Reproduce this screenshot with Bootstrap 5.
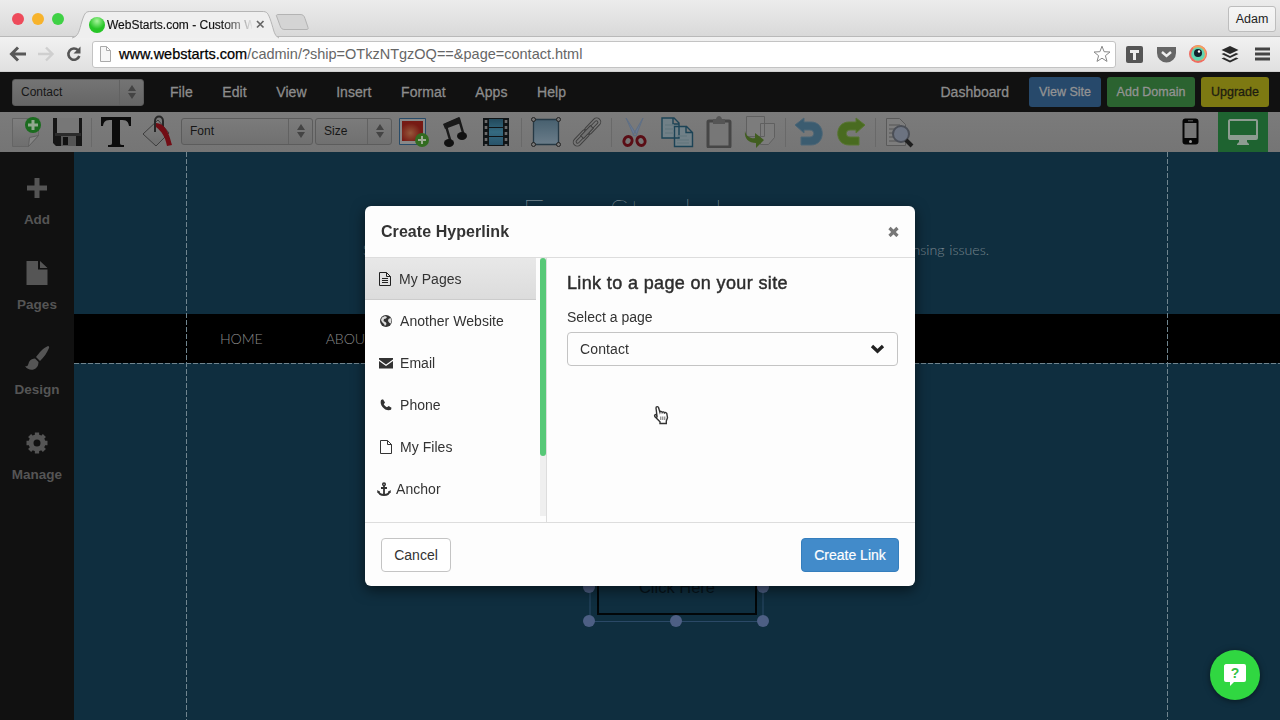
<!DOCTYPE html>
<html lang="en">
<head>
<meta charset="utf-8">
<title>WebStarts.com - Custom Website</title>
<link rel="stylesheet" href="https://cdn.jsdelivr.net/npm/bootstrap@5.3.0/dist/css/bootstrap.min.css">
<style>
body{width:1280px;height:720px;overflow:hidden;font:14px/20px "Liberation Sans",Arial,sans-serif;color:#333;background:#0f2e3f}
svg{display:block;flex:none}
.tabstrip{height:37px;background:linear-gradient(#ececec,#d9d9d9);border-bottom:1px solid #b9b9b9;padding-left:12px}
.lights{gap:8px;margin-top:1px}
.lights i{width:12px;height:12px;border-radius:50%}
.lights .r{background:#ee4b5b}.lights .y{background:#f7b32c}.lights .g{background:#3fd145}
.tab-front{width:207px;height:27px;margin:11px 0 -1px 0;position:relative;z-index:1}
.tab-front>svg.shape,.tab-next{overflow:visible}
.tab-front .face{position:absolute;inset:0;padding-left:17px}
.tab-text{width:145px;font-size:12px;color:#111;white-space:nowrap;letter-spacing:0;margin-left:2px;-webkit-text-stroke:.15px #111;-webkit-mask-image:linear-gradient(90deg,#000 115px,transparent 147px)}
.profile{width:48px;height:26px;border:1px solid #bdbdbd;border-radius:3px;background:linear-gradient(#f6f6f6,#ececec);font-size:12.5px;color:#222;margin:6px 4px 0 auto}
.omni{height:35px;background:linear-gradient(#f1f1f1,#e0e0e0);border-bottom:1px solid #cfcfcf;padding-left:9px}
.address{width:1024px;height:27px;background:#fff;border:1px solid #c3c3c3;border-radius:3px;padding:0 4px 0 6px;font-size:14.5px;color:#666;white-space:nowrap}
.address-text{margin-left:7px}
.address b{font-weight:400;color:#000;-webkit-text-stroke:.25px #000}
.menubar{height:40px;background:#111;padding:0 11px 0 12px;color:#8c8c8c;-webkit-text-stroke:.3px currentColor}
.menus{gap:29.6px;margin-left:26px;letter-spacing:.05px}
.dash{margin-right:20px}
.picker{border:1px solid #5c5c5c;border-radius:3px;background:linear-gradient(#747474,#666);font-size:12px;color:#161616;-webkit-text-stroke:0;padding-left:8px}
.picker.page{width:132px;height:27px;-webkit-text-stroke:0}
.picker .arrows{width:24px;border-left:1px solid #626262}
.topbtn{height:30px;font-size:12.5px;border-radius:3px;border:0;color:#939393}
.view{width:72px;background:#27496b}.domain{width:88px;background:#2b6330;margin:0 6px}.upgrade{width:68px;background:#7d7912;color:#1d1d10}
.tools{height:40px;background:linear-gradient(#7b7b7b,#757575);display:grid;align-items:center;justify-items:center;
grid-template-columns:52px 32px 14px 36px 47px 132px 2px 77px 43px 41px 40px 10px 39px 44px 4px 44px 40px 43px 40px 10px 38px 45px 4px 44px 1fr 41px 7px 50px 12px}
.tools>svg{margin-top:-1px}
.tools .picker{height:27px;width:100%;background:linear-gradient(#7b7b7b,#707070);margin-top:-2px}
.bar{width:1px;height:29px;background:#696969}
.device{background:#1e6330}
.workspace{height:568px}
.rail{width:74px;background:#111;padding-top:22px;color:#555;font-weight:700;font-size:13.5px}
.rail div{height:85px}
.rail span{margin-top:8px;line-height:20px}
.rail svg{height:28px}
.site{position:relative;background:#0f2e3f;overflow:hidden}
.thin{font-family:Lato,"Open Sans",sans-serif;font-weight:300;color:#77858c}
.site-head{height:162px;padding-top:37px}
.site-head h1{font:100 40px/48px Lato,sans-serif;letter-spacing:.25px;margin:0;color:#a3afb5}
.site-head p{font-size:14.2px;line-height:20px;margin:3px 0 0;width:626px;text-align:justify;text-align-last:justify;white-space:nowrap;position:relative;left:-1px}
.site-nav{height:49px;background:#000;padding-left:146px;gap:63px;color:#8a8a8a;font-size:14.2px;letter-spacing:-.1px}
.guide{position:absolute;inset:0 112px 0 112px;pointer-events:none}
.guide svg{width:100%;height:100%}
.fold{top:211px}
.cta{position:absolute;left:508px;top:394px}
.shade{position:fixed;inset:206px 0 auto 0}
.dialog{width:550px;height:380px;background:#fdfdfd;border-radius:6px;box-shadow:0 4px 14px rgba(0,0,0,.55);overflow:hidden}
.dialog-head{height:52px;border-bottom:1px solid #ddd;padding:0 16px;font-size:16px;letter-spacing:.06px}
.dialog-main{height:264px}
.side{width:182px;border-right:1px solid #ddd}
.side .opts{width:171px;letter-spacing:.04px}
.side .opts div{height:42px;padding-left:14px}
.side .opts .on{background:linear-gradient(#e8e8e8,#dcdcdc);border-bottom:1px solid #ccc}
.side .opts svg{width:14px;margin-right:7px}
.side .opts .last{padding-left:12px}.side .opts .last svg{margin-right:5px}
.side .opts .on svg{width:14px;margin-left:-1px}
.track{width:6px;height:258px;background:#efefef;margin-left:4px}
.track i{height:198px;background:#57c877;border-radius:3px}
.pane{padding:13px 17px 0 20px}
.pane h2{font-size:18px;line-height:24px;margin:0 0 13px;letter-spacing:.36px;color:#2d2d2d;-webkit-text-stroke:.45px #2d2d2d}
.pane label{line-height:18px;margin-bottom:6px}
.choice{height:34px;border:1px solid #c4c4c4;border-radius:4px;padding:0 12px;letter-spacing:.12px}
.dialog-foot{height:64px;border-top:1px solid #ddd;padding:0 16px}
.dialog-foot button{height:34px;font-size:14px;border-radius:4px;padding:1px 0 0}
.cancel{width:70px;border-color:#c4c4c4;color:#333}
.create{width:98px;background:#428bca;border-color:#357ebd;-webkit-text-stroke:.2px #fff}
.hand{position:absolute;left:653px;top:405px}
.help{position:absolute;right:20px;bottom:20px;width:50px;height:50px;border-radius:50%;background:#30d741;box-shadow:0 1px 6px rgba(0,0,0,.5)}
</style>
</head>
<body class="d-flex flex-column">
<svg width="0" height="0" class="position-absolute">
<defs>
<symbol id="updown" viewBox="0 0 10 14"><path d="M1 6 5 0l4 6zM1 8l4 6 4-6z" fill="#444"/></symbol>
<linearGradient id="paper" x2="0" y2="1"><stop stop-color="#7f7f7f"/><stop offset="1" stop-color="#6e6e6e"/></linearGradient>
<linearGradient id="sky" x2="0" y2="1"><stop stop-color="#47606f"/><stop offset="1" stop-color="#6b7d8a"/></linearGradient>
<linearGradient id="film" x2="0" y2="1"><stop stop-color="#22495b"/><stop offset=".5" stop-color="#356a80"/><stop offset="1" stop-color="#28536a"/></linearGradient>
<radialGradient id="sunset" cx=".4" cy=".6"><stop stop-color="#95583a"/><stop offset="1" stop-color="#761a14"/></radialGradient>
<radialGradient id="ball" cy=".25"><stop stop-color="#a7f59c"/><stop offset="1" stop-color="#26c526"/></radialGradient>
</defs>
</svg>

<header class="tabstrip d-flex">
  <div class="lights d-flex align-items-center"><i class="r"></i><i class="y"></i><i class="g"></i></div>
  <div class="tab-front ms-2">
    <svg class="shape" width="207" height="27"><path d="M0 27C7 25 7 20 10 10 13 1 14 .5 19 .5H190c5 0 6 1 9 10 3 9 3 14 8 16.500" fill="#efefef" stroke="#b5b5b5"/></svg>
    <div class="face d-flex align-items-center">
      <svg width="16" height="16"><circle cx="8" cy="8" r="8" fill="url(#ball)"/></svg>
      <span class="tab-text">WebStarts.com - Custom W</span>
      <svg width="9" height="9" class="ms-1"><path d="M1 1l6.500 6.500M7.500 1 1 7.500" stroke="#666" stroke-width="1.700"/></svg>
    </div>
  </div>
  <svg class="tab-next align-self-center mt-2 ms-n1" width="33" height="16"><g transform="translate(-3 0)"><path d="M.5 2C0 .8 1 .5 3 .5H24c3 0 4 1 5 4l3 9c.5 1.500 0 2-2 2H9c-3 0-4-1-5-4z" fill="#d4d4d4" stroke="#b3b3b3"/></g></svg>
  <div class="profile d-flex align-items-center justify-content-center">Adam</div>
</header>
<div class="omni d-flex align-items-center">
  <svg width="83" height="18" fill="none"><path d="M17 9H3M9 2.500 2.500 9 9 15.500" stroke="#585858" stroke-width="3"/><path d="M29 9h14M37 2.500 43.500 9 37 15.500" stroke="#cfcfcf" stroke-width="2.400"/><path d="M69 5.200A5.600 5.600 0 1 0 70.300 11" stroke="#555" stroke-width="2.600"/><path d="M71.500 1.500v7h-7z" fill="#555"/></svg>
  <div class="address d-flex align-items-center">
    <svg width="13" height="16" fill="#f6f6f6" stroke="#aaa"><path d="M1.500.5h6l4 4v11h-10zM7.500.5v4h4"/></svg>
    <span class="address-text"><b>www.webstarts.com</b>/cadmin/?ship=OTkzNTgzOQ==&amp;page=contact.html</span>
    <svg class="ms-auto" width="18" height="18"><path d="m9 1.200 2.100 5.500 5.900.3-4.600 3.700 1.600 5.700L9 13.200l-5 3.200 1.600-5.700L1 7l5.900-.3z" fill="#fff" stroke="#888"/></svg>
  </div>
  <svg width="164" height="24">
    <rect x="10" y="4" width="17" height="17" rx="2" fill="#555"/><path d="M14 8h9v3h-3v7h-3v-7h-3z" fill="#eee"/>
    <path d="M41 5h19v6a9.500 9.500 0 0 1-19 0z" fill="#666"/><path d="m46 10 4.500 4 4.500-4" stroke="#eee" stroke-width="2.400" fill="none"/>
    <circle cx="82" cy="12" r="9" fill="#ef6d62"/><path d="M77 5a8 8 0 0 1 10 13l-8 1z" fill="#f2a35f"/><circle cx="82" cy="12" r="6.800" fill="#61d5b2"/><circle cx="82" cy="11" r="4" fill="#12202c"/><circle cx="83" cy="9.500" r="1.200" fill="#fff"/>
    <path d="m114 4 8.500 4-8.500 4-8.500-4zM105.500 12l2.500-1 6 3 6-3 2.500 1-8.500 4zM105.500 16.500l2.500-1 6 3 6-3 2.500 1-8.500 4z" fill="#292929"/>
    <path d="M139 7h15M139 12h15M139 17h15" stroke="#444" stroke-width="2.800"/>
  </svg>
</div>

<nav class="menubar d-flex align-items-center">
  <div class="picker page d-flex align-items-center">Contact<span class="arrows ms-auto h-100 d-flex align-items-center justify-content-center"><svg width="10" height="14"><use href="#updown"/></svg></span></div>
  <div class="menus d-flex"><span>File</span><span>Edit</span><span>View</span><span>Insert</span><span>Format</span><span>Apps</span><span>Help</span></div>
  <span class="dash ms-auto">Dashboard</span>
  <button class="topbtn view">View Site</button>
  <button class="topbtn domain">Add Domain</button>
  <button class="topbtn upgrade">Upgrade</button>
</nav>

<div class="tools">
  <svg width="31" height="32"><path d="M1.500 2.500h26v17l-10 11h-16z" fill="url(#paper)" stroke="#656565"/><path d="m17.500 30.500 1-9 9-2z" fill="#858585" stroke="#606060"/><circle cx="22" cy="9" r="8" fill="#1b6c1f"/><path d="M22 4v10M17 9h10" stroke="#92a98f" stroke-width="3"/></svg>
  <svg width="32" height="32"><path d="M1 2h4v15h22V2h3v28H4l-3-3z" fill="#161616"/><path d="M5 2h22v14H5z" fill="#777"/><path d="M3 17h26v3H3z" fill="#2b2b2b"/><path d="M9 20h15v10H9z" fill="#555"/><path d="M11 21h5v8h-5z" fill="#111"/></svg>
  <i class="bar"></i>
  <svg width="32" height="32"><path d="M1 1h30v9h-2c-1-5-2-6-9-6v23c0 2 1 2 4 2v2H8v-2c3 0 4 0 4-2V4C5 4 4 5 3 10H1z" fill="#0c0c0c"/></svg>
  <svg width="33" height="33"><path d="m2 19 15-14 11 13-13 13z" fill="url(#paper)" stroke="#3e3e3e"/><path d="M14 17V6c0-6 8-6 8 0v8" fill="none" stroke="#282828" stroke-width="2"/><path d="M15 8c8 1 12 6 16 22l-5 1c-2-10-5-14-11-19z" fill="#720d15"/></svg>
  <div class="picker d-flex align-items-center">Font<span class="arrows ms-auto h-100 d-flex align-items-center justify-content-center"><svg width="10" height="14"><use href="#updown"/></svg></span></div>
  <i></i>
  <div class="picker d-flex align-items-center">Size<span class="arrows ms-auto h-100 d-flex align-items-center justify-content-center"><svg width="10" height="14"><use href="#updown"/></svg></span></div>
  <svg width="32" height="32"><path d="M1.500 2.500h26v26h-26z" fill="#888" stroke="#284b68"/><path d="M4 5h21v20H4z" fill="url(#sunset)"/><circle cx="24" cy="24" r="7" fill="#326c20"/><path d="M24 20v8M20 24h8" stroke="#9eac94" stroke-width="2"/></svg>
  <svg width="29" height="32"><path d="m4 9 14-6 5 17M5 10l5 17" fill="none" stroke="#1a1a1a" stroke-width="2.500"/><path d="m2 8 16-7 2 6L4 13z" fill="#191919"/><ellipse cx="8" cy="27" rx="5" ry="4" fill="#111"/><ellipse cx="21" cy="20" rx="5" ry="4" fill="#111"/></svg>
  <svg width="28" height="32"><path d="M1 2h26v28H1z" fill="#101416"/><path d="M7 3h14v8H7zM7 12h14v8H7zM7 21h14v8H7z" fill="url(#film)"/><path d="M4 4v26M24 4v26" stroke="#6c6c6c" stroke-width="2.600" stroke-dasharray="3 3"/></svg>
  <i class="bar"></i>
  <svg width="32" height="32"><path d="M3.500 3.500h25v25h-25z" fill="url(#sky)" stroke="#263945" stroke-width="1.300"/><g fill="#777" stroke="#222"><circle cx="3.500" cy="3.500" r="2"/><circle cx="28.500" cy="3.500" r="2"/><circle cx="3.500" cy="28.500" r="2"/><circle cx="28.500" cy="28.500" r="2"/></g></svg>
  <svg width="32" height="32" fill="none" stroke="#404040"><g transform="rotate(-46 16 16)"><rect x="-2" y="12" width="20" height="8" rx="4"/><rect x="1" y="14.500" width="14" height="3" rx="1.500"/><rect x="14" y="12" width="20" height="8" rx="4"/><rect x="17" y="14.500" width="14" height="3" rx="1.500"/><path d="M9 14h14v4H9z" fill="#707070"/></g></svg>
  <i class="bar"></i>
  <svg width="28" height="32"><path d="m5 2 11 17-3 1zM22 2 12 19l3 1z" fill="#6a7890" stroke="#5f6f84"/><g fill="none" stroke="#5a0d15" stroke-width="3"><ellipse cx="7" cy="25" rx="4" ry="4.500" transform="rotate(25 7 25)"/><ellipse cx="20" cy="25" rx="4" ry="4.500" transform="rotate(-25 20 25)"/></g></svg>
  <svg width="33" height="32" fill="#718087" stroke="#1c4356" stroke-width="1.400"><path d="M1 2h12l5 5v15H1zM12 2v6h6M13.500 10.500h12l6 6v14h-18zM25 10.500v6h6"/><path d="M4 9h9M4 13h9M4 17h9M16 20h10M16 24h12M16 27h12" stroke="#667880"/></svg>
  <svg width="26" height="32"><rect x="2" y="5" width="22" height="26" rx="1" fill="#777" stroke="#464646" stroke-width="3"/><path d="M7 3h3c1-4 5-4 6 0h3v5H7z" fill="#555"/></svg>
  <svg width="32" height="33"><path d="M2.500 1.500h18v20h-18zM16.500 8.500h14v14l-6 7h-8z" fill="#7c7c7c" stroke="#606060"/><path d="M1 16c1 6 7 8 10 7v-5l9 7-8 8v-5C5 28 0 24 1 16z" fill="#415e20"/></svg>
  <i class="bar"></i>
  <svg width="30" height="30"><path d="m1 8 9-7v4h7c15 0 15 23 0 23H7v-8h9c5 0 5-7 0-7h-6v3z" fill="#3b5c70" stroke="#4c6677"/></svg>
  <svg width="30" height="30"><path d="m29 8-9-7v4h-7c-15 0-15 23 0 23h10v-8h-9c-5 0-5-7 0-7h6v3z" fill="#496b20" stroke="#587632"/></svg>
  <i class="bar"></i>
  <svg width="30" height="32"><path d="M2.500 2.500h13l6 6v21h-19z" fill="#7d7d7d" stroke="#5a5a5a"/><path d="M5 9h11M5 13h10M5 17h10M5 21h8M5 25h10" stroke="#555"/><circle cx="17" cy="18" r="8" fill="#6c7381" stroke="#4b4f57" stroke-width="2"/><path d="m22 24 6 6" stroke="#1e1e1e" stroke-width="4"/></svg>
  <i></i>
  <svg width="17" height="27"><rect x=".5" y=".5" width="16" height="26" rx="3" fill="#060606"/><path d="M2.500 5h12v15h-12z" fill="#777"/><circle cx="8.500" cy="23.500" r="1.500" fill="#999"/><path d="M6 2.800h5" stroke="#666"/></svg>
  <i></i>
  <div class="device h-100 w-100 d-flex align-items-center justify-content-center"><svg width="30" height="28"><path fill-rule="evenodd" d="M2 1h26a2 2 0 0 1 2 2v17a2 2 0 0 1-2 2h-9v2l2 2v1H9v-1l2-2v-2H2a2 2 0 0 1-2-2V3c0-1 1-2 2-2zm0 2v14h26V3z" fill="#8d9c91"/></svg></div>
</div>

<main class="workspace d-flex">
  <aside class="rail text-center">
    <div><svg class="mx-auto" width="20" height="28"><path d="M7.500 4h5v7.500H20v5h-7.500V24h-5v-7.500H0v-5h7.500z" fill="#555"/></svg><span class="d-block">Add</span></div>
    <div><svg class="mx-auto" width="22" height="28"><path d="M.5 2H12v8.500h9.500V26H.5zM14 2l7.500 7H14z" fill="#555"/></svg><span class="d-block">Pages</span></div>
    <div><svg class="mx-auto" width="26" height="28"><path d="M24 2c1 0 1.500 1 1 2-2 5-5 9-9 13l-4-4C15 9 19 4 24 2zM11 14.500l3.500 3.500c0 9-10 10-13.500 4 3 1 3-1 4-4 1.500-3 4-3.500 6-3.500z" fill="#555"/></svg><span class="d-block">Design</span></div>
    <div><svg class="mx-auto" width="22" height="28" viewBox="-11 -14 22 28"><circle r="6" fill="none" stroke="#555" stroke-width="5"/><path d="M0-10.500V-6M0 6v4.500M-10.500 0H-6M6 0h4.500M-7.400-7.400-4.500-4.500M4.500 4.500l2.900 2.900M-7.400 7.400l2.900-2.900M4.500-4.500l2.900-2.900" stroke="#555" stroke-width="4.300"/></svg><span class="d-block">Manage</span></div>
  </aside>
  <section class="site flex-grow-1">
    <div class="site-head thin d-flex flex-column align-items-center">
      <h1>Free Stock Images</h1>
      <p>Stockd is a collection of free images that you can use without having to worry about licensing issues.</p>
    </div>
    <div class="site-nav thin d-flex align-items-center"><span>HOME</span><span>ABOUT</span></div>
    <div class="guide"><svg><path d="M.5 0v568M981.500 0v568" stroke="#70858f" stroke-dasharray="5 2"/></svg></div>
    <div class="fold position-absolute w-100"><svg width="1206" height="1"><path d="M0 .5h1206" stroke="#70858f" stroke-dasharray="5 2"/></svg></div>
    <svg class="cta" width="190" height="84"><rect x="8" y="7.500" width="173" height="68" fill="none" stroke="#2b4967"/><rect x="16" y="15" width="158" height="53" fill="none" stroke="#020608" stroke-width="2"/><text x="95" y="47" text-anchor="middle" font-size="16.500" fill="#06131a">Click Here</text><g fill="#4d5f84"><circle cx="7" cy="7" r="6"/><circle cx="94" cy="7" r="6"/><circle cx="181" cy="7" r="6"/><circle cx="7" cy="41" r="6"/><circle cx="181" cy="41" r="6"/><circle cx="7" cy="75" r="6"/><circle cx="94" cy="75" r="6"/><circle cx="181" cy="75" r="6"/></g></svg>
  </section>
</main>

<div class="shade d-flex justify-content-center">
  <div class="dialog d-flex flex-column">
    <div class="dialog-head d-flex align-items-center justify-content-between"><strong>Create Hyperlink</strong><svg width="11" height="11"><path d="m1.500 2 8 8M9.500 2l-8 8" stroke="#777" stroke-width="3.200"/></svg></div>
    <div class="dialog-main d-flex">
      <div class="side d-flex">
        <div class="opts">
          <div class="on d-flex align-items-center"><svg height="14" fill="none" stroke="#222"><path d="M1.500.5h7l4 4v9h-11zM8.500.5v4h4M4 6.500h6M4 8.500h6M4 10.500h6"/></svg>My Pages</div>
          <div class="d-flex align-items-center"><svg height="14"><circle cx="7" cy="7" r="6" fill="#333"/><path d="M3 3.500 6 2l2 1-1 1.500-2 .5-.5 2L7 8.500l.5 1.500-1.500 2L5 10 3 8 2 6zM9.500 5l2-1 1 2-.5 3.500-1.500-.5-1.500-2z" fill="#ddd"/></svg>Another Website</div>
          <div class="d-flex align-items-center"><svg height="12"><path d="M0 1h14v1.500L7 7.500 0 2.500zM0 4l7 5 7-5v7.500H0z" fill="#333"/></svg>Email</div>
          <div class="d-flex align-items-center"><svg height="14"><path d="m2 2 2-.8 2 3.300-1.200 1.700c.8 1.500 1.900 2.400 3.200 3L9.700 8l2.800 1.800-.5 2C7 14 0 8 2 2z" fill="#333"/></svg>Phone</div>
          <div class="d-flex align-items-center"><svg height="14" fill="none" stroke="#333"><path d="M1.500.5h7l4 4v9h-11zM8.500.5v4h4"/></svg>My Files</div>
          <div class="last d-flex align-items-center"><svg height="14" fill="none" stroke="#333"><circle cx="7" cy="2.300" r="1.300" stroke-width="1.500"/><path d="M7 4v9M4 6h6M1.500 9.500C2 12 4 13 7 13s5-1 5.500-3.500" stroke-width="1.800"/><path d="M.3 11V8l3 2zM13.700 11V8l-3 2z" fill="#333" stroke="none"/></svg>Anchor</div>
        </div>
        <div class="track"><i class="d-block"></i></div>
      </div>
      <div class="pane flex-grow-1">
        <h2>Link to a page on your site</h2>
        <label class="d-block">Select a page</label>
        <div class="choice d-flex align-items-center justify-content-between">Contact<svg width="15" height="10"><path d="m2 2 5.500 5.200L13 2" fill="none" stroke="#222" stroke-width="3.300"/></svg></div>
      </div>
    </div>
    <div class="dialog-foot d-flex align-items-center justify-content-between"><button class="btn cancel bg-white">Cancel</button><button class="btn btn-primary create">Create Link</button></div>
  </div>
</div>
<svg class="hand" width="16" height="20"><path d="M4.200 12.500 3 3c0-1.700 2.300-1.900 2.600-.2l1.300 4.400c.3-1.200 2-1.200 2.300.2.500-.9 2-.7 2.200.5.800-.8 2.300-.3 2.400.8l.7 4-1.200 3.300v2.500H7v-1.700L1.800 11.500c-.8-1.600.7-2.600 1.800-1.200z" fill="#fff" stroke="#333" stroke-width="1.400"/><path d="M7.800 11.500v3.500M9.800 11.500v3.500M11.800 11.500v3.500" stroke="#444" stroke-width=".8"/></svg>
<div class="help d-flex align-items-center justify-content-center"><svg width="24" height="24"><path d="M3 1h18a2 2 0 0 1 2 2v14a2 2 0 0 1-2 2H11l-4 4v-4H3a2 2 0 0 1-2-2V3c0-1 1-2 2-2z" fill="#fff"/><text x="12" y="15" text-anchor="middle" font-size="14" font-weight="700" fill="#35c245">?</text></svg></div>
<script src="https://cdn.jsdelivr.net/npm/bootstrap@5.3.0/dist/js/bootstrap.bundle.min.js"></script>
</body>
</html>
